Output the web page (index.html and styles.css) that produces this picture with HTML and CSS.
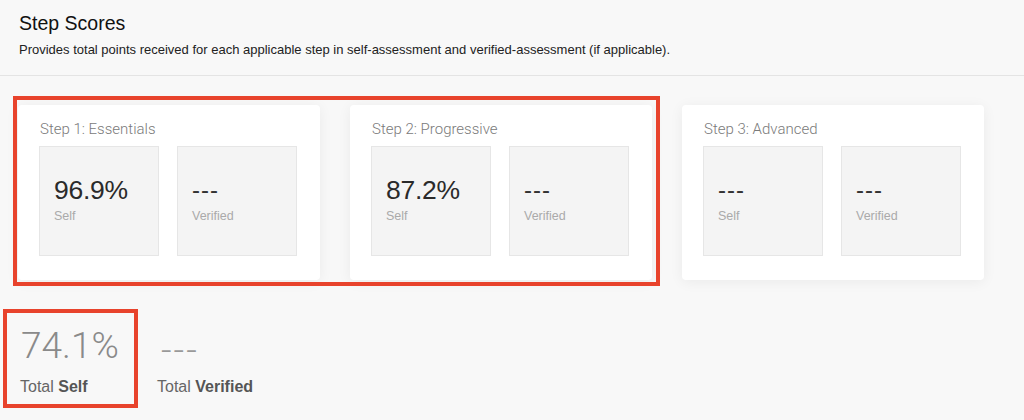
FILE: index.html
```html
<!DOCTYPE html>
<html>
<head>
<meta charset="utf-8">
<link rel="stylesheet" href="styles.css">
</head>
<body>
<div class="page">
  <header class="head">
    <h1 class="title">Step Scores</h1>
    <p class="subtitle">Provides total points received for each applicable step in self-assessment and verified-assessment (if applicable).</p>
  </header>
  <section class="cards">
    <div class="card">
      <div class="card-title">Step 1: Essentials</div>
      <div class="boxes">
        <div class="box"><div class="val">96.9%</div><div class="lbl">Self</div></div>
        <div class="box"><div class="val dash">---</div><div class="lbl">Verified</div></div>
      </div>
    </div>
    <div class="card">
      <div class="card-title">Step 2: Progressive</div>
      <div class="boxes">
        <div class="box"><div class="val">87.2%</div><div class="lbl">Self</div></div>
        <div class="box"><div class="val dash">---</div><div class="lbl">Verified</div></div>
      </div>
    </div>
    <div class="card">
      <div class="card-title">Step 3: Advanced</div>
      <div class="boxes">
        <div class="box"><div class="val dash">---</div><div class="lbl">Self</div></div>
        <div class="box"><div class="val dash">---</div><div class="lbl">Verified</div></div>
      </div>
    </div>
  </section>
  <section class="totals">
    <div class="total">
      <div class="total-val">74.1%</div>
      <div class="total-lbl">Total <b>Self</b></div>
    </div>
    <div class="total">
      <div class="total-val tdash">---</div>
      <div class="total-lbl">Total <b>Verified</b></div>
    </div>
  </section>
  <div class="mark mark-cards"></div>
  <div class="mark mark-total"></div>
</div>
</body>
</html>
```
FILE: styles.css
```css
html, body {
  margin: 0;
  padding: 0;
  background: #f8f8f8;
  font-family: "Liberation Sans", Arial, sans-serif;
}
.page {
  position: relative;
  width: 1024px;
  height: 420px;
  overflow: hidden;
}
.head {
  padding: 11px 19px 0;
  box-sizing: border-box;
  height: 76px;
  border-bottom: 1px solid #e4e4e4;
}
.title {
  margin: 0;
  font-size: 19.5px;
  line-height: 24px;
  font-weight: normal;
  color: #111;
}
.subtitle {
  margin: 7px 0 0;
  font-size: 13px;
  line-height: 16px;
  color: #222;
}
.cards {
  display: flex;
  gap: 30px;
  padding: 29px 0 0 18px;
}
.card {
  width: 302px;
  box-sizing: border-box;
  height: 175px;
  background: #fff;
  border-radius: 4px;
  box-shadow: 0 2px 14px rgba(0, 0, 0, 0.06);
  padding: 15px 21px 0;
}
.card-title {
  font-family: Roboto, "Liberation Sans", sans-serif;
  font-weight: 300;
  font-size: 15px;
  line-height: 18px;
  color: #7a7a7a;
  margin-left: 1px;
}
.boxes {
  display: flex;
  gap: 18px;
  margin-top: 8px;
}
.box {
  width: 120px;
  height: 110px;
  box-sizing: border-box;
  background: #f4f4f4;
  border: 1px solid #e6e6e6;
  padding: 28px 0 0 14px;
}
.val {
  font-size: 26.5px;
  line-height: 30px;
  color: #2a2a2a;
  letter-spacing: -0.3px;
}
.val.dash {
  color: #333;
  letter-spacing: 1px;
  font-size: 24px;
}
.lbl {
  margin-top: 4px;
  font-size: 12.5px;
  line-height: 15px;
  color: #aaa;
}
.totals {
  display: flex;
  padding: 45px 0 0 21px;
}
.total {
  display: flex;
  flex-direction: column;
  width: 137px;
}
.total-val {
  font-family: Roboto, "Liberation Sans", sans-serif;
  font-weight: 300;
  font-size: 37px;
  line-height: 42px;
  color: #8a8a8a;
}
.tdash {
  color: #999;
  letter-spacing: 2px;
  padding: 5px 0 0 3px;
  margin-bottom: -5px;
}
.total-lbl {
  margin-top: 10px;
  margin-left: -1px;
  font-size: 16px;
  line-height: 19px;
  color: #666;
}
.total-lbl b {
  color: #555;
}
.mark {
  position: absolute;
  border: 4px solid #e8432c;
  box-sizing: border-box;
}
.mark-cards {
  left: 13px;
  top: 96px;
  width: 647px;
  height: 190px;
}
.mark-total {
  left: 3px;
  top: 309px;
  width: 135px;
  height: 99px;
}
```
